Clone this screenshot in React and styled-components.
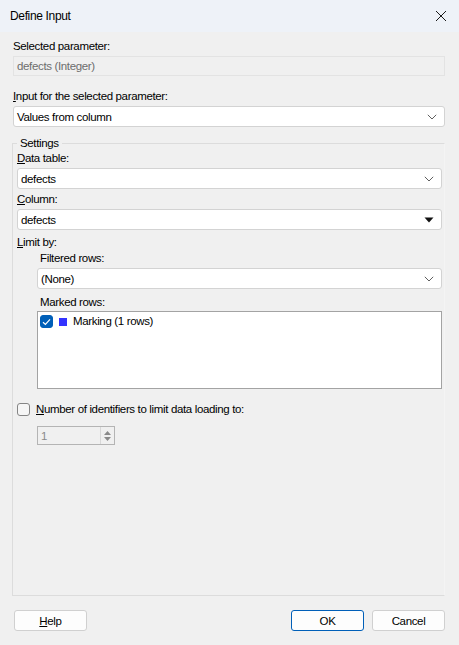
import React from "react";
import { styled, createGlobalStyle } from "styled-components";

const Global = createGlobalStyle`
  html, body {
    margin: 0;
    padding: 0;
    background: #f0f0f0;
  }
  body {
    font-family: "Liberation Sans", Arial, sans-serif;
    font-size: 11.5px;
    letter-spacing: -0.35px;
    color: #000;
  }
`;

const Chevron = () => (
  <svg width="10" height="6" viewBox="0 0 10 6">
    <path d="M0.8 0.8 L5 5 L9.2 0.8" fill="none" stroke="#5f5f5f" strokeWidth="1" />
  </svg>
);

const Triangle = () => (
  <svg width="10" height="6" viewBox="0 0 10 6">
    <path d="M0.5 0.5 H9.5 L5 5.5 Z" fill="#111" />
  </svg>
);

const Check = () => (
  <svg width="9" height="8" viewBox="0 0 9 8">
    <path d="M1 4.2 L3.4 6.4 L8 1.4" fill="none" stroke="#fff" strokeWidth="1.2" />
  </svg>
);

const Combo = ({ value, solid }) => (
  <ComboBox>
    <span>{value}</span>
    {solid ? <Triangle /> : <Chevron />}
  </ComboBox>
);

const App = () => {
  return (
    <Window>
      <Global />
      <TitleBar>
        <Title>Define Input</Title>
        <CloseIcon width="12" height="12" viewBox="0 0 12 12">
          <path d="M1 1 L11 11 M11 1 L1 11" stroke="#1a1a1a" strokeWidth="1" />
        </CloseIcon>
      </TitleBar>

      <Body>
        <Label>Selected parameter:</Label>
        <ReadOnly>defects (Integer)</ReadOnly>

        <Label $top={13}>
          <u>I</u>nput for the selected parameter:
        </Label>
        <Combo value="Values from column" />

        <Group>
          <legend>Settings</legend>
          <Label>
            <u>D</u>ata table:
          </Label>
          <Combo value="defects" />

          <Label $top={3}>
            <u>C</u>olumn:
          </Label>
          <Combo value="defects" solid />

          <Label $top={5}>
            <u>L</u>imit by:
          </Label>
          <Indent>
            <Label $top={-1} $left={3}>
              Filtered rows:
            </Label>
            <Combo value="(None)" />

            <Label $top={6} $left={3} $bottom={1}>
              Marked rows:
            </Label>
            <ListBox>
              <ListItem>
                <CheckBox $checked>
                  <Check />
                </CheckBox>
                <Swatch />
                <span>Marking (1 rows)</span>
              </ListItem>
            </ListBox>
          </Indent>

          <CheckRow>
            <CheckBox />
            <span>
              <u>N</u>umber of identifiers to limit data loading to:
            </span>
          </CheckRow>
          <Indent>
            <Spin>
              <span>1</span>
              <SpinButtons>
                <svg width="7" height="4" viewBox="0 0 7 4">
                  <path d="M0 4 L3.5 0 L7 4 Z" fill="#8a8a8a" />
                </svg>
                <svg width="7" height="4" viewBox="0 0 7 4">
                  <path d="M0 0 L3.5 4 L7 0 Z" fill="#8a8a8a" />
                </svg>
              </SpinButtons>
            </Spin>
          </Indent>
        </Group>

        <Footer>
          <Button>
            <u>H</u>elp
          </Button>
          <Spacer />
          <Button $primary>OK</Button>
          <Button>Cancel</Button>
        </Footer>
      </Body>
    </Window>
  );
};

const Window = styled.div`
  width: 459px;
  height: 645px;
  display: flex;
  flex-direction: column;
  background: #f0f0f0;
  overflow: hidden;
`;

const TitleBar = styled.div`
  height: 32px;
  flex: none;
  display: flex;
  align-items: center;
  justify-content: space-between;
  padding: 0 12px 0 10px;
  background: #eef2f8;
`;

const Title = styled.span`
  font-size: 12px;
  color: #000;
`;

const CloseIcon = styled.svg`
  display: block;
`;

const Body = styled.div`
  flex: 1;
  display: flex;
  flex-direction: column;
  padding: 7px 14px 0 13px;
`;

const Label = styled.div`
  line-height: 15px;
  height: 15px;
  margin-top: ${(p) => p.$top || 0}px;
  padding-left: ${(p) => p.$left || 0}px;
  margin-bottom: ${(p) => (p.$bottom === undefined ? 2 : p.$bottom)}px;
  white-space: nowrap;
`;

const ReadOnly = styled.div`
  height: 20px;
  box-sizing: border-box;
  border: 1px solid #e3e3e3;
  background: #f0f0f0;
  color: #6d6d6d;
  padding: 0 3px;
  line-height: 18px;
`;

const ComboBox = styled.div`
  height: 21px;
  box-sizing: border-box;
  border: 1px solid #d3d3d3;
  border-radius: 3px;
  background: #fff;
  display: flex;
  align-items: center;
  justify-content: space-between;
  padding: 0 7px 0 3px;
`;

const Group = styled.fieldset`
  margin: 9px 0 0 -1px;
  padding: 0 2px 0 4px;
  border: 1px solid #dcdcdc;
  border-right-color: #f4f4f4;
  height: 460px;
  box-sizing: border-box;
  display: flex;
  flex-direction: column;

  legend {
    padding: 0 3px;
    line-height: 15px;
    font-size: 11.5px;
  }
`;

const Indent = styled.div`
  padding-left: 20px;
  display: flex;
  flex-direction: column;
`;

const ListBox = styled.div`
  height: 78px;
  box-sizing: border-box;
  border: 1px solid #a3a3a3;
  background: #fff;
  padding: 3px 2px;
`;

const ListItem = styled.div`
  display: flex;
  align-items: center;
  gap: 6px;
  height: 13px;
  line-height: 15px;
`;

const CheckBox = styled.span`
  width: 13px;
  height: 13px;
  box-sizing: border-box;
  border-radius: 3px;
  flex: none;
  display: flex;
  align-items: center;
  justify-content: center;
  background: ${(p) => (p.$checked ? "#005fb8" : "#f6f6f6")};
  border: 1px solid ${(p) => (p.$checked ? "#005fb8" : "#858585")};
`;

const Swatch = styled.span`
  width: 8px;
  height: 8px;
  background: #3333ff;
  flex: none;
`;

const CheckRow = styled.div`
  display: flex;
  align-items: center;
  gap: 6px;
  margin-top: 13px;
  height: 15px;
  line-height: 15px;
`;

const Spin = styled.div`
  margin-top: 9px;
  width: 78px;
  height: 19px;
  box-sizing: border-box;
  border: 1px solid #b4b4b4;
  background: #f0f0f0;
  color: #8a8a8a;
  display: flex;
  align-items: center;
  justify-content: space-between;
  padding-left: 3px;
`;

const SpinButtons = styled.div`
  width: 14px;
  height: 100%;
  display: flex;
  flex-direction: column;
  align-items: center;
  justify-content: center;
  gap: 2px;
  border-left: 1px solid #d8d8d8;
  box-sizing: border-box;
`;

const Footer = styled.div`
  display: flex;
  gap: 8px;
  margin-top: 14px;
  padding-left: 1px;
`;

const Spacer = styled.div`
  flex: 1;
`;

const Button = styled.button`
  width: 73px;
  height: 21px;
  box-sizing: border-box;
  border-radius: 3px;
  border: 1px solid ${(p) => (p.$primary ? "#005fb8" : "#d0d0d0")};
  background: #fdfdfd;
  font-family: inherit;
  font-size: 11.5px;
  letter-spacing: -0.35px;
  color: #000;
  padding: 0;
`;

export default App;
